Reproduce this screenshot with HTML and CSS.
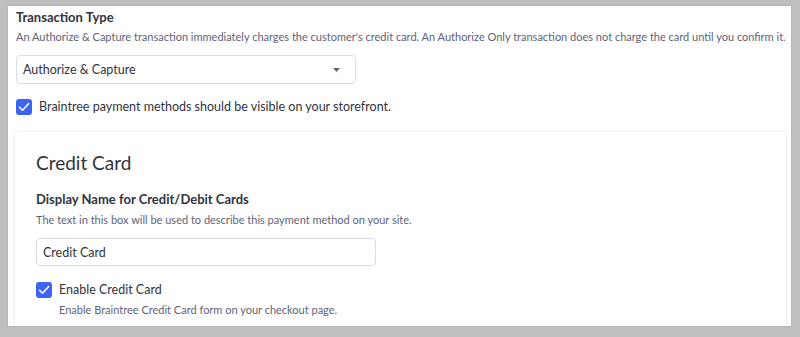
FILE: index.html
```html
<!DOCTYPE html>
<html lang="en">
<head>
<meta charset="utf-8">
<link rel="stylesheet" href="styles.css">
</head>
<body>
<div class="panel">
  <section class="field">
    <h3 class="label">Transaction Type</h3>
    <p class="help">An Authorize &amp; Capture transaction immediately charges the customer's credit card. An Authorize Only transaction does not charge the card until you confirm it.</p>
    <div class="select">
      <span>Authorize &amp; Capture</span>
      <svg class="caret" width="7" height="4" viewBox="0 0 7 4"><path d="M0 0h7L3.5 4z" fill="#5e637a"/></svg>
    </div>
  </section>
  <label class="check">
    <span class="box"><svg width="12" height="10" viewBox="0 0 12 10"><path d="M1.5 5.2l3 3 6-6.5" fill="none" stroke="#fff" stroke-width="1.6" stroke-linecap="round" stroke-linejoin="round"/></svg></span>
    <span class="check-text">Braintree payment methods should be visible on your storefront.</span>
  </label>
  <div class="card">
    <h2 class="card-title">Credit Card</h2>
    <h3 class="label">Display Name for Credit/Debit Cards</h3>
    <p class="help">The text in this box will be used to describe this payment method on your site.</p>
    <div class="input">Credit Card</div>
    <label class="check check-top">
      <span class="box"><svg width="12" height="10" viewBox="0 0 12 10"><path d="M1.5 5.2l3 3 6-6.5" fill="none" stroke="#fff" stroke-width="1.6" stroke-linecap="round" stroke-linejoin="round"/></svg></span>
      <span class="check-body">
        <span class="check-text">Enable Credit Card</span>
        <span class="check-help">Enable Braintree Credit Card form on your checkout page.</span>
      </span>
    </label>
  </div>
</div>
</body>
</html>
```

FILE: styles.css
```css
* { box-sizing: border-box; }
html, body { margin: 0; padding: 0; }
body {
  background: #bfbfbf;
  font-family: Lato, "Open Sans", sans-serif;
  color: #313440;
  height: 337px;
  overflow: hidden;
  padding: 6px 9px 0 8px;
}
.panel {
  background: #fff;
  height: 320px;
  overflow: hidden;
  padding: 3px 0 0 8px;
  box-shadow: 0 0 2px rgba(0,0,0,0.12);
}
.label {
  margin: 0;
  font-size: 13px;
  font-weight: 700;
  line-height: 16px;
}
.help {
  margin: 4px 0 0;
  font-size: 11px;
  line-height: 16px;
  color: #5e637a;
}
.select {
  margin-top: 10px;
  width: 340px;
  height: 29px;
  border: 1px solid #d9dce9;
  border-radius: 4px;
  display: flex;
  align-items: center;
  justify-content: space-between;
  padding: 0 15px 0 6px;
  font-size: 12.5px;
}
.check {
  display: flex;
  align-items: center;
  gap: 7px;
  margin-top: 15px;
  font-size: 12.5px;
}
.box {
  width: 16px;
  height: 16px;
  border-radius: 3px;
  background: #3c64f4;
  display: flex;
  align-items: center;
  justify-content: center;
  flex: none;
}
.card {
  margin: 17px 5px 0 -1px;
  background: #fff;
  border-radius: 4px;
  box-shadow: 0 0 3px rgba(0,0,0,0.1), 0 1px 4px rgba(0,0,0,0.06);
  padding: 18px 20px 20px 21px;
  height: 230px;
}
.card-title {
  margin: 0 0 15px;
  font-size: 19px;
  font-weight: 400;
  line-height: 26px;
}
.card .help { margin-top: 5px; }
.input {
  margin-top: 10px;
  width: 340px;
  height: 28px;
  border: 1px solid #d9dce9;
  border-radius: 4px;
  display: flex;
  align-items: center;
  padding: 0 6px;
  font-size: 12.5px;
}
.check-top { align-items: flex-start; margin-top: 16px; }
.check-body { display: flex; flex-direction: column; }
.check-text { line-height: 16px; }
.check-help { font-size: 11px; line-height: 16px; color: #5e637a; margin-top: 4px; }
```
